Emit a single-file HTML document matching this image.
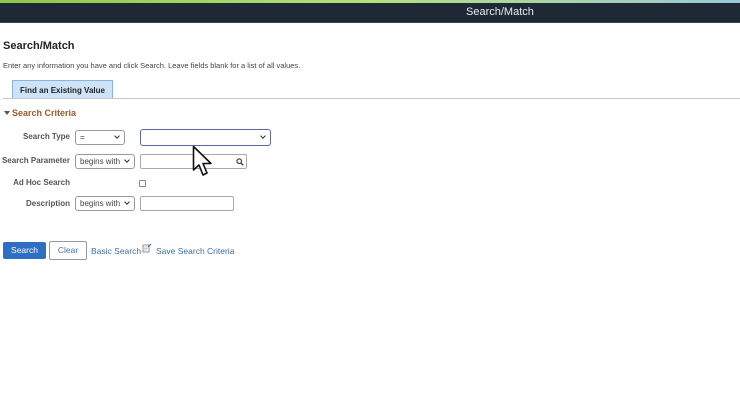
<!DOCTYPE html>
<html><head><style>
*{margin:0;padding:0;box-sizing:border-box}
body{width:740px;height:416px;background:#fff;font-family:"Liberation Sans",Arial,sans-serif;position:relative;overflow:hidden;color:#333}
.a{position:absolute}
.top{left:0;top:0;width:740px;height:3px;background:linear-gradient(90deg,#8fc74a,#b5e07a 50%,#9cc8d8)}
.bar{left:0;top:3px;width:740px;height:20px;background:#1f2835;border-bottom:1px solid #3a4350}
.lbl{font-size:8px;font-weight:bold;color:#555;text-align:right;width:70px}
.sel{border:1px solid #999;border-radius:3px;height:15px;font-size:8px;padding:2px 4px;background:#fff;color:#444}
.chev{position:absolute;right:5px;top:3px;width:4px;height:4px;border-right:1.5px solid #333;border-bottom:1.5px solid #333;transform:rotate(45deg)}
.inp{border:1px solid #aaa;border-radius:2px;height:15px;background:#fff}
.lnk{font-size:8.5px;color:#3f6ea8}
</style></head><body>
<div class="a top"></div>
<div class="a bar"></div>
<div class="a" style="left:466px;top:6px;font-size:11px;color:#e8ecf0">Search/Match</div>
<div class="a" style="left:3px;top:40px;font-size:11px;font-weight:bold;color:#222">Search/Match</div>
<div class="a" style="left:3px;top:61px;font-size:7.5px;color:#444">Enter any information you have and click Search. Leave fields blank for a list of all values.</div>
<div class="a" style="left:12px;top:80px;width:101px;height:19px;background:#cde3f8;border:1px solid #8ab4dc;border-bottom:none;font-size:8px;font-weight:bold;color:#222;text-align:center;line-height:19px">Find an Existing Value</div>
<div class="a" style="left:3px;top:98px;width:737px;height:1px;background:#c8c8c8"></div>
<div class="a" style="left:4px;top:111px;width:0;height:0;border-left:3px solid transparent;border-right:3px solid transparent;border-top:4px solid #555"></div>
<div class="a" style="left:12px;top:108px;font-size:9px;font-weight:bold;color:#a0582a">Search Criteria</div>

<div class="a lbl" style="left:0;top:132px">Search Type</div>
<div class="a sel" style="left:75px;top:130px;width:50px">=<span class="chev"></span></div>
<div class="a sel" style="left:140px;top:129px;width:131px;height:17px;border-color:#5a6a9a"><span class="chev" style="top:4px"></span></div>

<div class="a lbl" style="left:0;top:156px">Search Parameter</div>
<div class="a sel" style="left:75px;top:154px;width:60px">begins with<span class="chev"></span></div>
<div class="a inp" style="left:140px;top:154px;width:107px">
<svg class="a" style="left:95px;top:3px" width="8" height="8" viewBox="0 0 8 8"><circle cx="3.2" cy="3.2" r="2.3" fill="none" stroke="#444" stroke-width="1.2"/><path d="M5 5L7.3 7.3" stroke="#444" stroke-width="1.4"/></svg></div>

<div class="a lbl" style="left:0;top:178px">Ad Hoc Search</div>
<div class="a" style="left:139px;top:180px;width:7px;height:7px;border:1px solid #888;border-radius:1px"></div>

<div class="a lbl" style="left:0;top:199px">Description</div>
<div class="a sel" style="left:75px;top:196px;width:60px">begins with<span class="chev"></span></div>
<div class="a inp" style="left:140px;top:196px;width:94px"></div>

<div class="a" style="left:3px;top:242px;width:43px;height:17px;background:#2e6fc4;border-radius:2px;color:#fff;font-size:8.5px;text-align:center;line-height:17px">Search</div>
<div class="a" style="left:49px;top:241px;width:38px;height:19px;border:1px solid #999;border-radius:2px;color:#4a74a8;font-size:8.5px;text-align:center;line-height:17px">Clear</div>
<div class="a lnk" style="left:91px;top:246px">Basic Search</div>
<svg class="a" style="left:142px;top:243px" width="10" height="10" viewBox="0 0 10 10"><rect x="1" y="2" width="6" height="7" fill="#fff" stroke="#777" stroke-width="0.8"/><path d="M2 4h4M2 5.5h4M2 7h3" stroke="#999" stroke-width="0.6"/><path d="M6 4L9 1" stroke="#3f6ea8" stroke-width="1.2"/></svg>
<div class="a lnk" style="left:156px;top:246px">Save Search Criteria</div>

<svg class="a" style="left:192px;top:145px" width="22" height="33" viewBox="0 0 22 33"><path d="M1.5 1.5L1.5 25L7 20L11 30L15 28L11 18.5L19 18.5Z" fill="#fff" stroke="#111" stroke-width="1.6" stroke-linejoin="round"/></svg>
</body></html>
